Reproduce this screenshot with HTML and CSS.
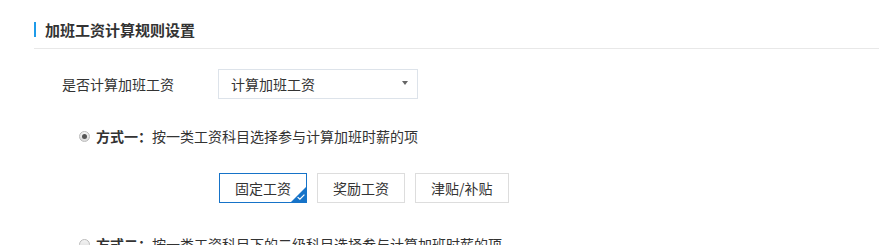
FILE: index.html
```html
<!DOCTYPE html>
<html lang="zh-CN">
<head>
<meta charset="utf-8">
<title>加班工资计算规则设置</title>
<link rel="stylesheet" href="styles.css">
</head>
<body>
<div class="page">
  <div class="section-head">
    <h2 class="section-title">加班工资计算规则设置</h2>
  </div>
  <div class="form-row">
    <label class="form-label">是否计算加班工资</label>
    <div class="select">
      <span class="select-value">计算加班工资</span>
      <span class="select-arrow"></span>
    </div>
  </div>
  <div class="radio-row">
    <span class="radio checked"></span>
    <span class="radio-text"><b>方式一：</b>按一类工资科目选择参与计算加班时薪的项</span>
  </div>
  <div class="tag-row">
    <button class="tag active">固定工资<span class="tag-corner"><svg viewBox="0 0 8 6" width="8" height="6"><path d="M0.6 3.1 L2.9 5.2 L7.4 0.7" fill="none" stroke="#fff" stroke-width="1.2"/></svg></span></button>
    <button class="tag">奖励工资</button>
    <button class="tag">津贴/补贴</button>
  </div>
  <div class="radio-row second">
    <span class="radio"></span>
    <span class="radio-text"><b>方式二：</b>按一类工资科目下的二级科目选择参与计算加班时薪的项</span>
  </div>
</div>
</body>
</html>
```
FILE: styles.css
```css
html, body {
  margin: 0;
  padding: 0;
  background: #fff;
}
body {
  font-family: "Noto Sans CJK SC", "Microsoft YaHei", "Liberation Sans", sans-serif;
  color: #333;
  font-size: 14px;
  overflow: hidden;
}
.page {
  padding: 22px 0 0 34px;
}
.section-head {
  border-bottom: 1px solid #e8e8e8;
  padding-bottom: 11px;
}
.section-title {
  margin: 0;
  font-size: 15px;
  font-weight: bold;
  line-height: 15px;
  border-left: 2px solid #1e9be9;
  padding-left: 9px;
  color: #333;
}
.form-row {
  display: flex;
  align-items: center;
  margin-top: 20px;
  padding-left: 28px;
}
.form-label {
  width: 156px;
  line-height: 30px;
}
.select {
  width: 200px;
  height: 30px;
  box-sizing: border-box;
  border: 1px solid #dde3ea;
  display: flex;
  align-items: center;
  justify-content: space-between;
  padding: 0 9px 0 12px;
}
.select-arrow {
  width: 0;
  height: 0;
  border-left: 3px solid transparent;
  border-right: 3px solid transparent;
  border-top: 4px solid #666;
  margin-top: -2px;
}
.radio-row {
  display: flex;
  align-items: center;
  margin-top: 27px;
  padding-left: 45px;
  line-height: 20px;
}
.radio-row.second {
  margin-top: 31px;
}
.radio {
  width: 11px;
  height: 11px;
  box-sizing: border-box;
  border: 1px solid #bbb;
  border-radius: 50%;
  background: linear-gradient(#f4f4f4, #dcdcdc);
  margin-right: 6px;
  display: flex;
  align-items: center;
  justify-content: center;
}
.radio.checked::after {
  content: "";
  width: 5px;
  height: 5px;
  border-radius: 50%;
  background: #555;
}
.radio-text b {
  font-weight: bold;
}
.tag-row {
  display: flex;
  gap: 10px;
  margin-top: 27px;
  padding-left: 185px;
}
.tag {
  position: relative;
  box-sizing: border-box;
  height: 30px;
  padding: 0 15px;
  border: 1px solid #ddd;
  background: #fff;
  color: #333;
  font: inherit;
  font-size: 14px;
  line-height: 28px;
  overflow: hidden;
}
.tag.active {
  border-color: #1673c8;
}
.tag-corner {
  position: absolute;
  right: 0;
  bottom: 0;
  width: 0;
  height: 0;
  border-left: 15px solid transparent;
  border-bottom: 15px solid #1673c8;
}
.tag-corner svg {
  position: absolute;
  right: 1px;
  top: 7px;
}
```
